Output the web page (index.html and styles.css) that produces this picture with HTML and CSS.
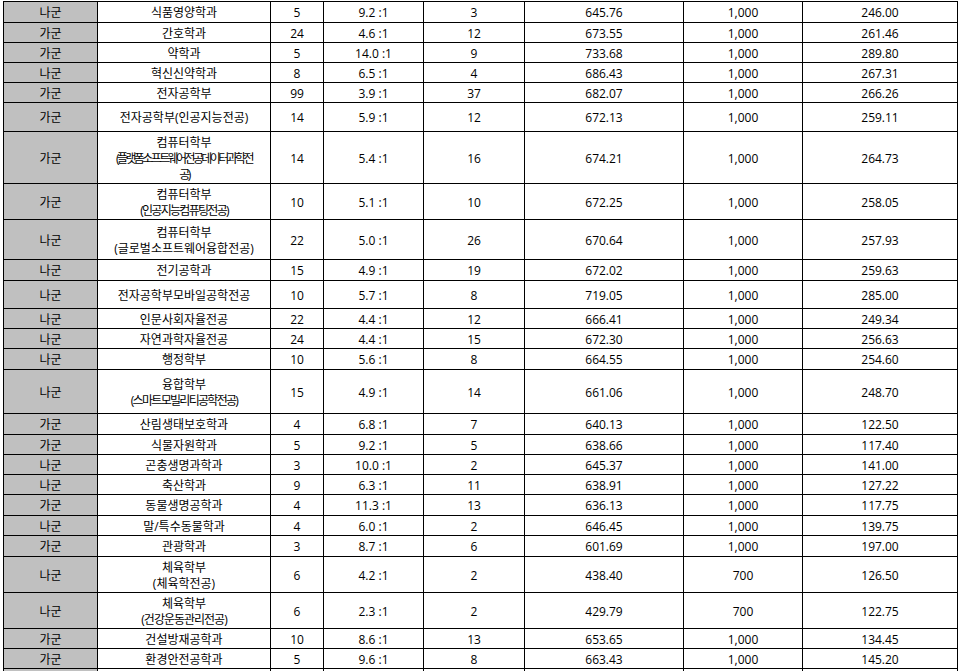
FILE: index.html
```html
<!DOCTYPE html>
<html lang="ko">
<head>
<meta charset="utf-8">
<title>모집결과</title>
<link rel="stylesheet" href="styles.css">
</head>
<body>
<div class="frame">
<table class="result">
<colgroup>
<col class="c-gun"><col class="c-dept"><col class="c-n"><col class="c-rate"><col class="c-fill"><col class="c-score"><col class="c-full"><col class="c-last">
</colgroup>
<tbody>
<tr class="h21"><td class="gun">나군</td><td>식품영양학과</td><td>5</td><td>9.2 :1</td><td>3</td><td>645.76</td><td>1,000</td><td>246.00</td></tr>
<tr class="h20"><td class="gun">가군</td><td>간호학과</td><td>24</td><td>4.6 :1</td><td>12</td><td>673.55</td><td>1,000</td><td>261.46</td></tr>
<tr class="h20"><td class="gun">가군</td><td>약학과</td><td>5</td><td>14.0 :1</td><td>9</td><td>733.68</td><td>1,000</td><td>289.80</td></tr>
<tr class="h20"><td class="gun">나군</td><td>혁신신약학과</td><td>8</td><td>6.5 :1</td><td>4</td><td>686.43</td><td>1,000</td><td>267.31</td></tr>
<tr class="h20"><td class="gun">가군</td><td>전자공학부</td><td>99</td><td>3.9 :1</td><td>37</td><td>682.07</td><td>1,000</td><td>266.26</td></tr>
<tr class="h29"><td class="gun">가군</td><td>전자공학부(인공지능전공)</td><td>14</td><td>5.9 :1</td><td>12</td><td>672.13</td><td>1,000</td><td>259.11</td></tr>
<tr class="h52"><td class="gun">가군</td><td>컴퓨터학부<br><span class="sq3">(플랫폼소프트웨어전공데이터과학전<br>공)</span></td><td>14</td><td>5.4 :1</td><td>16</td><td>674.21</td><td>1,000</td><td>264.73</td></tr>
<tr class="h36"><td class="gun">가군</td><td>컴퓨터학부<br><span class="sq2">(인공지능컴퓨팅전공)</span></td><td>10</td><td>5.1 :1</td><td>10</td><td>672.25</td><td>1,000</td><td>258.05</td></tr>
<tr class="h40"><td class="gun">나군</td><td>컴퓨터학부<br>(글로벌소프트웨어융합전공)</td><td>22</td><td>5.0 :1</td><td>26</td><td>670.64</td><td>1,000</td><td>257.93</td></tr>
<tr class="h21"><td class="gun">나군</td><td>전기공학과</td><td>15</td><td>4.9 :1</td><td>19</td><td>672.02</td><td>1,000</td><td>259.63</td></tr>
<tr class="h28"><td class="gun">나군</td><td>전자공학부모바일공학전공</td><td>10</td><td>5.7 :1</td><td>8</td><td>719.05</td><td>1,000</td><td>285.00</td></tr>
<tr class="h20"><td class="gun">나군</td><td>인문사회자율전공</td><td>22</td><td>4.4 :1</td><td>12</td><td>666.41</td><td>1,000</td><td>249.34</td></tr>
<tr class="h20"><td class="gun">나군</td><td>자연과학자율전공</td><td>24</td><td>4.4 :1</td><td>15</td><td>672.30</td><td>1,000</td><td>256.63</td></tr>
<tr class="h21"><td class="gun">나군</td><td>행정학부</td><td>10</td><td>5.6 :1</td><td>8</td><td>664.55</td><td>1,000</td><td>254.60</td></tr>
<tr class="h44"><td class="gun">나군</td><td>융합학부<br><span class="sq2">(스마트모빌리티공학전공)</span></td><td>15</td><td>4.9 :1</td><td>14</td><td>661.06</td><td>1,000</td><td>248.70</td></tr>
<tr class="h21"><td class="gun">가군</td><td>산림생태보호학과</td><td>4</td><td>6.8 :1</td><td>7</td><td>640.13</td><td>1,000</td><td>122.50</td></tr>
<tr class="h20"><td class="gun">가군</td><td>식물자원학과</td><td>5</td><td>9.2 :1</td><td>5</td><td>638.66</td><td>1,000</td><td>117.40</td></tr>
<tr class="h20"><td class="gun">나군</td><td>곤충생명과학과</td><td>3</td><td>10.0 :1</td><td>2</td><td>645.37</td><td>1,000</td><td>141.00</td></tr>
<tr class="h20"><td class="gun">나군</td><td>축산학과</td><td>9</td><td>6.3 :1</td><td>11</td><td>638.91</td><td>1,000</td><td>127.22</td></tr>
<tr class="h21"><td class="gun">가군</td><td>동물생명공학과</td><td>4</td><td>11.3 :1</td><td>13</td><td>636.13</td><td>1,000</td><td>117.75</td></tr>
<tr class="h20"><td class="gun">나군</td><td>말/특수동물학과</td><td>4</td><td>6.0 :1</td><td>2</td><td>646.45</td><td>1,000</td><td>139.75</td></tr>
<tr class="h21"><td class="gun">가군</td><td>관광학과</td><td>3</td><td>8.7 :1</td><td>6</td><td>601.69</td><td>1,000</td><td>197.00</td></tr>
<tr class="h36"><td class="gun">나군</td><td>체육학부<br>(체육학전공)</td><td>6</td><td>4.2 :1</td><td>2</td><td>438.40</td><td>700</td><td>126.50</td></tr>
<tr class="h36"><td class="gun">나군</td><td>체육학부<br><span class="sq1">(건강운동관리전공)</span></td><td>6</td><td>2.3 :1</td><td>2</td><td>429.79</td><td>700</td><td>122.75</td></tr>
<tr class="h20"><td class="gun">가군</td><td>건설방재공학과</td><td>10</td><td>8.6 :1</td><td>13</td><td>653.65</td><td>1,000</td><td>134.45</td></tr>
<tr class="h20"><td class="gun">가군</td><td>환경안전공학과</td><td>5</td><td>9.6 :1</td><td>8</td><td>663.43</td><td>1,000</td><td>145.20</td></tr>
<tr class="h20"><td class="gun"></td><td></td><td></td><td></td><td></td><td></td><td></td><td></td></tr>
</tbody>
</table>
</div>
</body>
</html>
```

FILE: styles.css
```css
html, body {
  margin: 0;
  padding: 0;
  background: #ffffff;
}

.frame {
  width: 961px;
  height: 671px;
  overflow: hidden;
  padding: 1px 0 0 3px;
  box-sizing: border-box;
}

.result {
  border-collapse: collapse;
  table-layout: fixed;
  width: 955px;
  font-family: "Open Sans", "Noto Sans CJK KR", sans-serif;
  font-size: 12px;
  color: #000000;
}

.c-gun { width: 94px; }
.c-dept { width: 173px; }
.c-n { width: 53px; }
.c-rate { width: 100px; }
.c-fill { width: 101px; }
.c-score { width: 159px; }
.c-full { width: 119px; }
.c-last { width: 155px; }

.result td {
  border: 1px solid #000000;
  padding: 2px 0 0 0;
  line-height: 16px;
  text-align: center;
  vertical-align: middle;
  white-space: nowrap;
  overflow: hidden;
}

.result td.gun {
  background: #c0c0c0;
}

.h20 { height: 20px; }
.h21 { height: 21px; }
.h28 { height: 28px; }
.h29 { height: 29px; }
.h36 { height: 36px; }
.h40 { height: 40px; }
.h44 { height: 44px; }
.h52 { height: 52px; }

.sq1 { letter-spacing: -1px; }
.sq2 { letter-spacing: -1.7px; }
.sq3 { letter-spacing: -2.6px; }
```
